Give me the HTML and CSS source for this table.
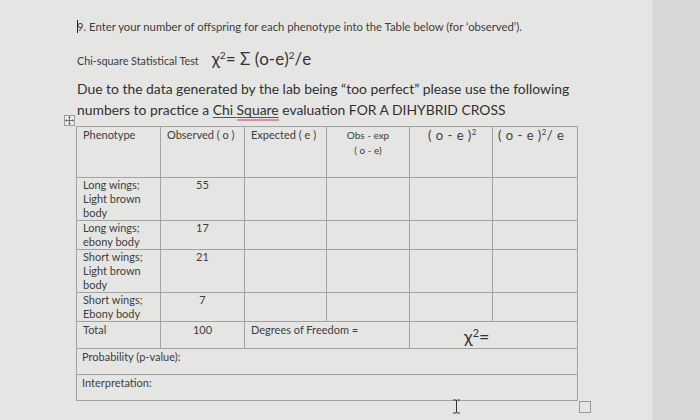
FILE: index.html
```html
<!DOCTYPE html>
<html lang="en">
<head>
<meta charset="utf-8">
<title>Chi Square Table</title>
<link rel="stylesheet" href="styles.css">
</head>
<body>
<div class="screen">
  <main class="page">
    <p class="question"><span class="caret-num">9</span>. Enter your number of offspring for each phenotype into the Table below (for ‘observed’).</p>
    <p class="formula-line"><span class="label">Chi-square Statistical Test</span><span class="formula">χ<sup>2</sup>= Σ (o-e)<sup>2</sup>/e</span></p>
    <p class="intro">Due to the data generated by the lab being “too perfect” please use the following<br>numbers to practice a <span class="link">Chi <span class="spell">Square</span></span> evaluation FOR A DIHYBRID CROSS</p>
    <div class="table-wrap">
      <span class="move-handle">
        <svg width="9" height="9" viewBox="0 0 9 9"><path d="M4.5 0.5v8M0.5 4.5h8M3.3 1.7l1.2-1.2 1.2 1.2M3.3 7.3l1.2 1.2 1.2-1.2M1.7 3.3L0.5 4.5l1.2 1.2M7.3 3.3l1.2 1.2-1.2 1.2" fill="none" stroke="#555" stroke-width="0.8"/></svg>
      </span>
      <table class="chi">
        <colgroup>
          <col class="c1"><col class="c2"><col class="c3"><col class="c4"><col class="c5"><col class="c6">
        </colgroup>
        <tr class="head">
          <td>Phenotype</td>
          <td>Observed ( o )</td>
          <td>Expected ( e )</td>
          <td class="center">Obs - exp<br>( o - e)</td>
          <td class="big">( o - e )<sup>2</sup></td>
          <td class="big big-left">( o - e )<sup>2</sup>/ e</td>
        </tr>
        <tr>
          <td>Long wings;<br>Light brown<br>body</td>
          <td class="num">55</td><td></td><td></td><td></td><td></td>
        </tr>
        <tr>
          <td>Long wings;<br>ebony body</td>
          <td class="num">17</td><td></td><td></td><td></td><td></td>
        </tr>
        <tr>
          <td>Short wings;<br>Light brown<br>body</td>
          <td class="num">21</td><td></td><td></td><td></td><td></td>
        </tr>
        <tr>
          <td>Short wings;<br>Ebony body</td>
          <td class="num">7</td><td></td><td></td><td></td><td></td>
        </tr>
        <tr class="total">
          <td>Total</td>
          <td class="num">100</td>
          <td colspan="2">Degrees of Freedom =</td>
          <td colspan="2" class="chi-cell">χ<sup>2</sup>=</td>
        </tr>
        <tr class="wide">
          <td colspan="6">Probability (p-value):</td>
        </tr>
        <tr class="wide">
          <td colspan="6">Interpretation:</td>
        </tr>
      </table>
      <span class="resize-handle"></span>
      <svg class="ibeam" width="9" height="15" viewBox="0 0 9 15"><path d="M1 1h2.5M5.5 1H8M4.5 1.5v12M1 14h2.5M5.5 14H8M3.5 1c0.6 0 1 0.3 1 0.8C4.5 1.3 4.9 1 5.5 1M3.5 14c0.6 0 1-0.3 1-0.8 0 0.5 0.4 0.8 1 0.8" fill="none" stroke="#333" stroke-width="1"/></svg>
    </div>
  </main>
  <aside class="strip"></aside>
</div>
</body>
</html>
```
FILE: styles.css
```css
* { box-sizing: border-box; }
html, body { margin: 0; padding: 0; }
body {
  width: 700px;
  height: 420px;
  overflow: hidden;
  background: #e4e5e3;
  font-family: "Lato", "Open Sans", sans-serif;
  color: #3a3b3a;
}
.screen {
  display: flex;
  height: 420px;
}
.page {
  width: 652px;
  padding: 20px 0 0 77px;
  background: #e5e6e4;
}
.strip {
  flex: 1;
  background: #d7d8d6;
  border-left: 1px solid #dcdddb;
}
p { margin: 0; }
.question {
  font-size: 11.3px;
  line-height: 14px;
  color: #3c3d3c;
}
.caret-num {
  position: relative;
}
.caret-num::before {
  content: "";
  position: absolute;
  left: 0;
  top: 0;
  height: 13px;
  border-left: 1px solid #222;
}
.formula-line {
  margin-top: 13px;
  display: flex;
  align-items: baseline;
  gap: 13px;
  line-height: 24px;
}
.label {
  font-size: 10.8px;
}
.formula {
  font-size: 17px;
  color: #333;
}
.formula sup, .chi-cell sup {
  font-size: 0.6em;
  vertical-align: 0.55em;
  line-height: 0;
}
.intro {
  margin-top: 5px;
  font-size: 13.9px;
  line-height: 21px;
  color: #303130;
}
.link {
  text-decoration: underline;
  text-decoration-color: #555;
  text-underline-offset: 2px;
}
.spell {
  border-bottom: 2px solid #e08aa0;
  padding-bottom: 1px;
}
.table-wrap {
  position: relative;
  margin-top: 6px;
  margin-left: -1px;
  width: 501px;
}
.move-handle {
  position: absolute;
  left: -12px;
  top: -11px;
  width: 11px;
  height: 11px;
  border: 1px solid #9a9a9a;
  background: #eeefed;
  display: flex;
  align-items: center;
  justify-content: center;
}
.move-handle svg { display: block; }
.chi {
  width: 501px;
  border-collapse: collapse;
  table-layout: fixed;
  font-size: 11px;
  color: #3c3d3c;
}
.c1 { width: 84px; }
.c2 { width: 84px; }
.c3 { width: 82px; }
.c4 { width: 83px; }
.c5 { width: 83px; }
.c6 { width: 85px; }
.chi td {
  border: 1px solid #a3a4a2;
  padding: 0 6px;
  line-height: 14px;
  vertical-align: top;
}
.chi .head td {
  height: 51px;
  padding-top: 1px;
}
.chi .head td.center {
  text-align: center;
  font-size: 10px;
  line-height: 15px;
}
.chi .head td.big {
  font-size: 13px;
  padding-left: 18px;
  padding-top: 1px;
  letter-spacing: 0.5px;
}
.chi .head td.big-left {
  padding-left: 5px;
}
.chi .head td.big sup {
  font-size: 0.6em;
  vertical-align: 0.6em;
  line-height: 0;
}
.chi td.num {
  text-align: center;
}
.chi .total td {
  height: 27px;
  padding-top: 1px;
}
.chi .total td.chi-cell {
  font-size: 18px;
  line-height: 20px;
  padding-top: 4px;
  padding-left: 54px;
  color: #333;
}
.chi .wide td {
  height: 26px;
  padding-top: 1px;
  padding-left: 5px;
}
.resize-handle {
  position: absolute;
  right: -14px;
  bottom: -12px;
  width: 12px;
  height: 12px;
  border: 1px solid #9a9a9a;
}
.ibeam {
  position: absolute;
  left: 376px;
  bottom: -13px;
}
```
